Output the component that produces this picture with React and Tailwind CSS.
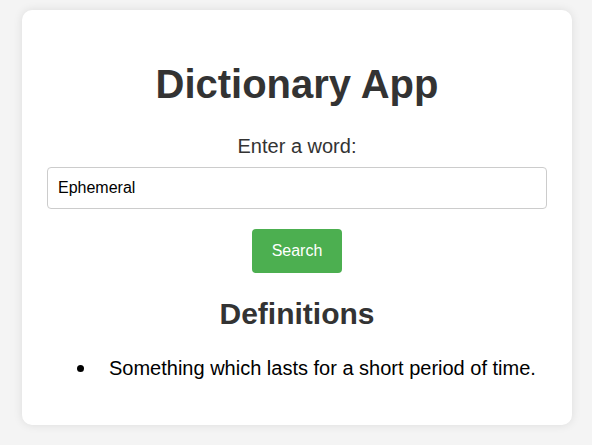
import { useState } from "react";

const App = () => {
  const [word, setWord] = useState("Ephemeral");

  return (
    <div className="min-h-screen bg-[#f4f4f4] pt-[10px] pl-[22px] font-['Liberation_Sans',Arial,sans-serif]">
      <div className="w-[550px] bg-white rounded-[10px] shadow-[0_0_10px_rgba(0,0,0,0.1)] px-[25px] pt-[25px] pb-[45px]">
        {/* Title */}
        <h1 className="mt-[26px] text-center text-[40px] leading-[46px] font-bold text-[#333]">
          Dictionary App
        </h1>

        {/* Form */}
        <label className="block mt-[27px] text-center text-[20px] leading-[24px] text-[#333]">
          Enter a word:
        </label>
        <input
          value={word}
          onChange={(e) => setWord(e.target.value)}
          className="block mt-[9px] w-[500px] h-[42px] px-[10px] border border-[#ccc] rounded-[4px] text-[16px] text-black outline-none"
        />
        <div className="flex justify-center mt-[20px]">
          <button className="w-[90px] h-[44px] bg-[#4caf50] text-white text-[16px] rounded-[4px]">
            Search
          </button>
        </div>

        {/* Definitions */}
        <h2 className="mt-[24px] text-center text-[30px] leading-[34px] font-bold text-[#333]">
          Definitions
        </h2>
        <ul className="mt-[26px]">
          <li className="flex items-center text-[20px] leading-[23px] text-black">
            <span className="ml-[30px] w-[7px] h-[7px] rounded-full bg-black" />
            <span className="ml-[25px]">Something which lasts for a short period of time.</span>
          </li>
        </ul>
      </div>
    </div>
  );
};

export default App;
